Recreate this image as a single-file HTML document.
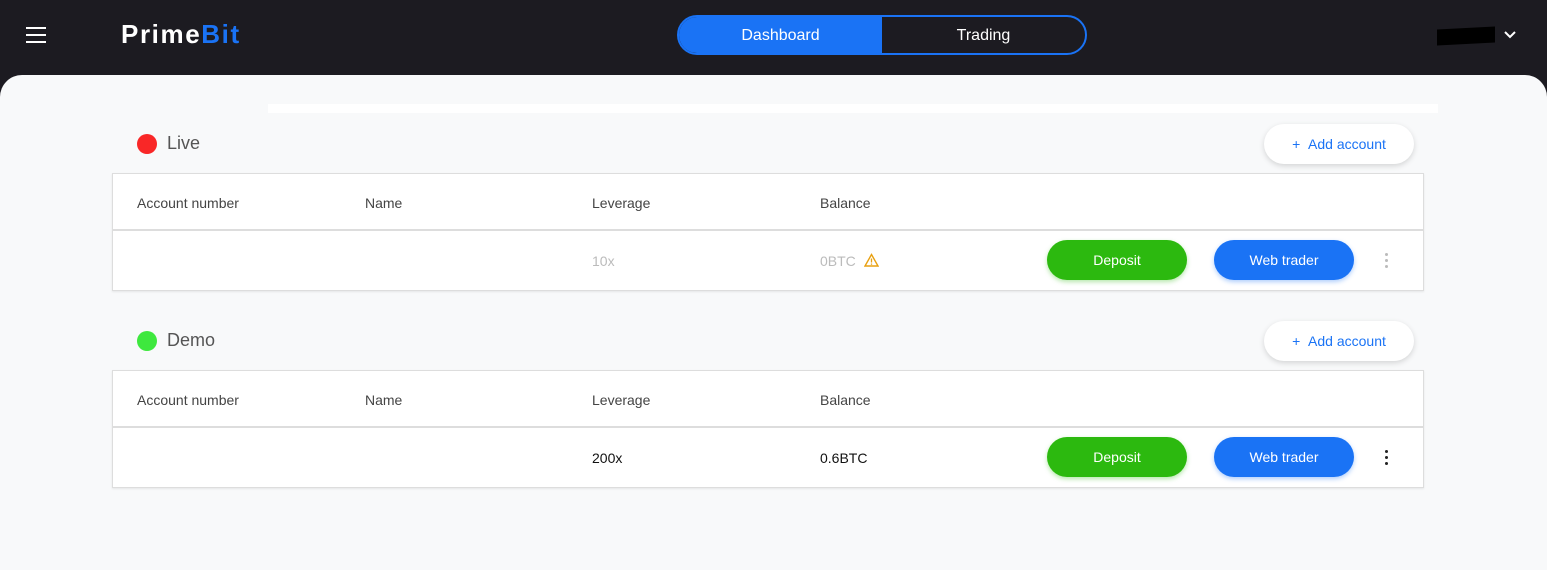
<!DOCTYPE html>
<html><head><meta charset="utf-8"><style>
*{margin:0;padding:0;box-sizing:border-box}
body{width:1547px;height:570px;background:#1c1b21;font-family:"Liberation Sans",Arial,sans-serif;position:relative;overflow:hidden}
.abs{position:absolute}
.ham span{position:absolute;left:26px;width:20px;height:2px;background:#fff}
.logo{left:121px;top:19px;font-size:26px;font-weight:bold;color:#fff;letter-spacing:1.6px}
.logo b{color:#1a73f5}
.tabs{left:677px;top:15px;width:410px;height:40px;border:2px solid #1a73f5;border-radius:20px;overflow:hidden;display:flex}
.tabs div{flex:1;display:flex;align-items:center;justify-content:center;color:#fff;font-size:16px;padding-top:2px}
.tabs .on{background:#1a73f5}
.main{left:0;top:75px;width:1547px;height:495px;background:#f8f9fa;border-radius:22px 22px 0 0}
.strip{left:268px;top:104px;width:1170px;height:9px;background:#fff}
.sec{font-size:18px;color:#555}
.dot{width:20px;height:20px;border-radius:50%}
.add{width:150px;height:40px;background:#fff;border-radius:20px;box-shadow:0 2px 6px rgba(0,0,0,.15);color:#1a73f5;font-size:14px;display:flex;align-items:center;justify-content:center}
.tbl{left:112px;width:1312px;height:118px;background:#fff;border:1px solid #ddd;box-shadow:0 1px 2px rgba(0,0,0,.08)}
.tbl .hd{height:57px;border-bottom:2px solid #ddd;position:relative}
.t{position:absolute;font-size:14px;color:#444}
.btn{position:absolute;width:140px;height:40px;border-radius:20px;color:#fff;font-size:14px;display:flex;align-items:center;justify-content:center}
.g{background:#2cb90f;box-shadow:0 2px 5px rgba(44,185,15,.35)}
.bl{background:#1a73f5;box-shadow:0 2px 5px rgba(26,115,245,.35)}
.kb span{position:absolute;width:3px;height:3px;border-radius:50%}
</style></head><body>
<div class="ham"><span style="top:27px"></span><span style="top:34px"></span><span style="top:41px"></span></div>
<div class="abs logo">Prime<b>Bit</b></div>
<div class="abs tabs"><div class="on">Dashboard</div><div>Trading</div></div>
<div class="abs" style="left:1437px;top:28px;width:58px;height:16px;background:#000;transform:skewY(-3deg)"></div>
<svg class="abs" style="left:1503px;top:30px" width="14" height="10"><path d="M2 2l5 5 5-5" stroke="#fff" stroke-width="2" fill="none"/></svg>
<div class="abs main"></div>
<div class="abs strip"></div>

<div class="abs dot" style="left:137px;top:134px;background:#f92727"></div>
<div class="abs sec" style="left:167px;top:133px">Live</div>
<div class="abs add" style="left:1264px;top:124px">+&nbsp;&nbsp;Add account</div>
<div class="abs tbl" style="top:173px">
 <div class="hd"><span class="t" style="left:24px;top:21px">Account number</span><span class="t" style="left:252px;top:21px">Name</span><span class="t" style="left:479px;top:21px">Leverage</span><span class="t" style="left:707px;top:21px">Balance</span></div>
 <span class="t" style="left:479px;top:79px;color:#bbb">10x</span>
 <span class="t" style="left:707px;top:79px;color:#bbb">0BTC</span>
 <svg class="abs" style="left:751px;top:79px" width="15" height="14"><path d="M7.5 1.5L14 13H1z" fill="none" stroke="#e8a010" stroke-width="1.4"/><path d="M7.5 5.5v4M7.5 10.5v1.3" stroke="#e8a010" stroke-width="1.3"/></svg>
 <div class="btn g" style="left:934px;top:66px">Deposit</div>
 <div class="btn bl" style="left:1101px;top:66px">Web trader</div>
 <div class="kb"><span style="left:1272px;top:79px;background:#bbb"></span><span style="left:1272px;top:85px;background:#bbb"></span><span style="left:1272px;top:91px;background:#bbb"></span></div>
</div>

<div class="abs dot" style="left:137px;top:331px;background:#3ee83e"></div>
<div class="abs sec" style="left:167px;top:330px">Demo</div>
<div class="abs add" style="left:1264px;top:321px">+&nbsp;&nbsp;Add account</div>
<div class="abs tbl" style="top:370px">
 <div class="hd"><span class="t" style="left:24px;top:21px">Account number</span><span class="t" style="left:252px;top:21px">Name</span><span class="t" style="left:479px;top:21px">Leverage</span><span class="t" style="left:707px;top:21px">Balance</span></div>
 <span class="t" style="left:479px;top:79px;color:#111">200x</span>
 <span class="t" style="left:707px;top:79px;color:#111">0.6BTC</span>
 <div class="btn g" style="left:934px;top:66px">Deposit</div>
 <div class="btn bl" style="left:1101px;top:66px">Web trader</div>
 <div class="kb"><span style="left:1272px;top:79px;background:#222"></span><span style="left:1272px;top:85px;background:#222"></span><span style="left:1272px;top:91px;background:#222"></span></div>
</div>
</body></html>
